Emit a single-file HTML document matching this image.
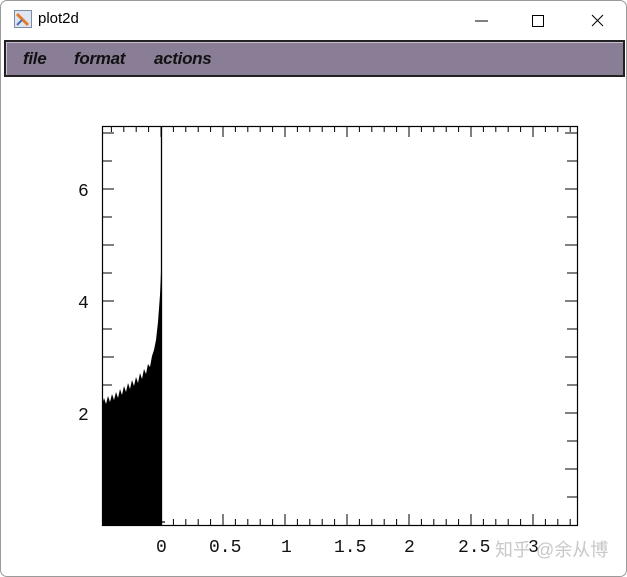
<!DOCTYPE html>
<html><head><meta charset="utf-8"><style>
html,body{margin:0;padding:0;width:627px;height:577px;overflow:hidden;background:#fff}
.win{position:absolute;left:0;top:0;width:625px;height:575px;border:1px solid #9a9a9a;border-radius:7px;background:#fff;overflow:hidden}
.title{position:absolute;left:37px;top:9px;font:15px "Liberation Sans",sans-serif;color:#000}
.menu{position:absolute;left:3px;top:39px;width:617px;height:33px;background:#8a7d96;border:2px solid #222;box-shadow:inset 1px 1px 0 #c8bfd0}
.menu span{position:absolute;top:7px;font:italic bold 17px "Liberation Sans",sans-serif;color:#111;letter-spacing:-0.3px}
</style></head><body>
<div class="win">
<svg style="position:absolute;left:13px;top:9px" width="18" height="18" viewBox="0 0 18 18"><rect x="0.5" y="0.5" width="17" height="17" fill="#dfe6ef" stroke="#7a8ca8"/><path d="M3 4 L14 15" stroke="#e07a30" stroke-width="3"/><path d="M3 15 L8 10" stroke="#4a6fb0" stroke-width="2"/></svg>
<div class="title">plot2d</div>
<svg style="position:absolute;left:470px;top:8px" width="140" height="24"><path d="M4 12h13" stroke="#000" stroke-width="1"/><rect x="61.5" y="6.5" width="11" height="11" fill="none" stroke="#000"/><path d="M121 6l11 11M132 6l-11 11" stroke="#000"/></svg>
<div class="menu"><span style="left:17px">file</span><span style="left:68px">format</span><span style="left:148px">actions</span></div>
<svg style="position:absolute;left:-1px;top:-1px" width="627" height="577">
<rect x="102.5" y="126.5" width="475" height="399" fill="none" stroke="#000" stroke-width="1.2"/>
<path fill="#000" d="M102 525 L102 405 L104 398 L106 404 L108 396 L110 402 L112 394 L114 400 L116 392 L118 398 L120 389 L122 395 L124 386 L126 392 L128 383 L130 389 L132 380 L134 386 L136 377 L138 383 L140 373 L142 379 L144 369 L146 374 L148 364 L150 367 L152 356 L154 350 L156 340 L158 322 L160 295 L161 272 L162 525 Z"/>
<path d="M161.5 126V525M162 522h3" stroke="#000" stroke-width="1.3" fill="none"/>
<path stroke="#000" stroke-width="1" fill="none" d="
M111.4 525v-6M123.8 525v-6M136.2 525v-6M148.6 525v-6M161 525v-11M173.4 525v-6M185.8 525v-6M198.2 525v-6M210.6 525v-6M223 525v-11M235.4 525v-6M247.8 525v-6M260.2 525v-6M272.6 525v-6M285 525v-11M297.4 525v-6M309.8 525v-6M322.2 525v-6M334.6 525v-6M347 525v-11M359.4 525v-6M371.8 525v-6M384.2 525v-6M396.6 525v-6M409 525v-11M421.4 525v-6M433.8 525v-6M446.2 525v-6M458.6 525v-6M471 525v-11M483.4 525v-6M495.8 525v-6M508.2 525v-6M520.6 525v-6M533 525v-11M545.4 525v-6M557.8 525v-6M570.2 525v-6
M111.4 126v6M123.8 126v6M136.2 126v6M148.6 126v6M161 126v11M173.4 126v6M185.8 126v6M198.2 126v6M210.6 126v6M223 126v11M235.4 126v6M247.8 126v6M260.2 126v6M272.6 126v6M285 126v11M297.4 126v6M309.8 126v6M322.2 126v6M334.6 126v6M347 126v11M359.4 126v6M371.8 126v6M384.2 126v6M396.6 126v6M409 126v11M421.4 126v6M433.8 126v6M446.2 126v6M458.6 126v6M471 126v11M483.4 126v6M495.8 126v6M508.2 126v6M520.6 126v6M533 126v11M545.4 126v6M557.8 126v6M570.2 126v6
M102 497h10M102 469h12M102 441h10M102 413h12M102 385h10M102 357h12M102 329h10M102 301h12M102 273h10M102 245h12M102 217h10M102 189h12M102 161h10M102 133h12
M577 497h-10M577 469h-12M577 441h-10M577 413h-12M577 385h-10M577 357h-12M577 329h-10M577 301h-12M577 273h-10M577 245h-12M577 217h-10M577 189h-12M577 161h-10M577 133h-12"/>
<g font-family="Liberation Mono,monospace" font-size="18" fill="#111">
<text x="78" y="196">6</text><text x="78" y="308">4</text><text x="78" y="420">2</text>
<text x="156" y="552">0</text><text x="209" y="552">0.5</text><text x="281" y="552">1</text><text x="334" y="552">1.5</text><text x="404" y="552">2</text><text x="458" y="552">2.5</text><text x="528" y="552">3</text>
</g>
<text x="495" y="556" font-family="Liberation Sans,Noto Sans CJK SC,sans-serif" font-size="18" fill="#c8c8c8">知乎 @余从博</text>
</svg>
</div>
</body></html>
